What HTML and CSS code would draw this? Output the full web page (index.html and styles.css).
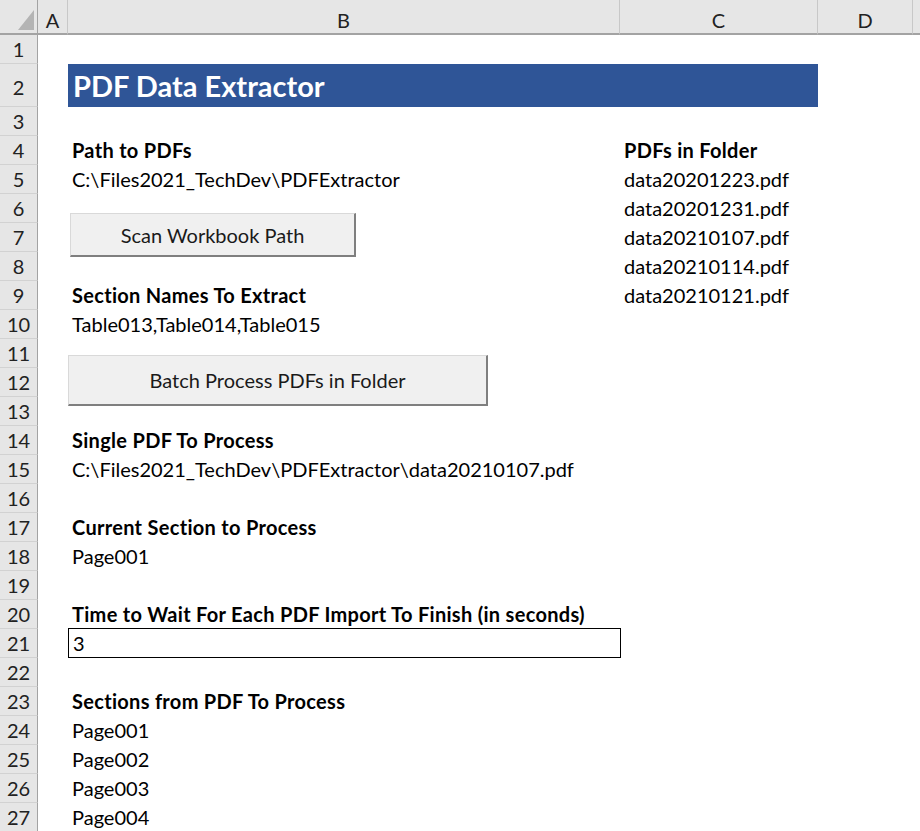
FILE: index.html
```html
<!DOCTYPE html>
<html lang="en">
<head>
<meta charset="utf-8">
<title>PDF Data Extractor</title>
<link rel="stylesheet" href="styles.css">
</head>
<body>
<div class="sheet">
  <div class="row">
    <div class="ch corner"><svg class="tri" width="16" height="20" viewBox="0 0 16 20"><polygon points="16,0 16,20 0,20" fill="#b4b4b4"/></svg></div>
    <div class="ch">A</div>
    <div class="ch">B</div>
    <div class="ch">C</div>
    <div class="ch">D</div>
    <div class="ch last"></div>
  </div>

  <div class="row"><div class="rh">1</div><div class="cell"></div><div class="cell"></div><div class="cell"></div><div class="cell"></div><div class="cell"></div></div>
  <div class="row"><div class="rh tall">2</div><div class="cell"></div><div class="cell banner">PDF Data Extractor</div><div class="cell"></div><div class="cell"></div></div>
  <div class="row"><div class="rh">3</div><div class="cell"></div><div class="cell"></div><div class="cell"></div><div class="cell"></div><div class="cell"></div></div>
  <div class="row"><div class="rh">4</div><div class="cell"></div><div class="cell txt bold">Path to PDFs</div><div class="cell txt bold">PDFs in Folder</div><div class="cell"></div><div class="cell"></div></div>
  <div class="row"><div class="rh">5</div><div class="cell"></div><div class="cell txt">C:\Files2021_TechDev\PDFExtractor</div><div class="cell txt">data20201223.pdf</div><div class="cell"></div><div class="cell"></div></div>

  <div class="btn-area scan-area"><div class="btn scan">Scan Workbook Path</div></div>
  <div class="row"><div class="rh">6</div><div class="cell"></div><div class="cell txt">data20201231.pdf</div><div class="cell"></div><div class="cell"></div></div>
  <div class="row"><div class="rh">7</div><div class="cell"></div><div class="cell txt">data20210107.pdf</div><div class="cell"></div><div class="cell"></div></div>
  <div class="row"><div class="rh">8</div><div class="cell"></div><div class="cell txt">data20210114.pdf</div><div class="cell"></div><div class="cell"></div></div>

  <div class="row"><div class="rh">9</div><div class="cell"></div><div class="cell txt bold">Section Names To Extract</div><div class="cell txt">data20210121.pdf</div><div class="cell"></div><div class="cell"></div></div>
  <div class="row"><div class="rh">10</div><div class="cell"></div><div class="cell txt">Table013,Table014,Table015</div><div class="cell"></div><div class="cell"></div><div class="cell"></div></div>

  <div class="btn-area batch-area"><div class="btn batch">Batch Process PDFs in Folder</div></div>
  <div class="row"><div class="rh">11</div><div class="cell"></div><div class="cell"></div><div class="cell"></div><div class="cell"></div></div>
  <div class="row"><div class="rh">12</div><div class="cell"></div><div class="cell"></div><div class="cell"></div><div class="cell"></div></div>
  <div class="row"><div class="rh">13</div><div class="cell"></div><div class="cell"></div><div class="cell"></div><div class="cell"></div></div>

  <div class="row"><div class="rh">14</div><div class="cell"></div><div class="cell txt bold">Single PDF To Process</div><div class="cell"></div><div class="cell"></div><div class="cell"></div></div>
  <div class="row"><div class="rh">15</div><div class="cell"></div><div class="cell txt">C:\Files2021_TechDev\PDFExtractor\data20210107.pdf</div><div class="cell"></div><div class="cell"></div><div class="cell"></div></div>
  <div class="row"><div class="rh">16</div><div class="cell"></div><div class="cell"></div><div class="cell"></div><div class="cell"></div><div class="cell"></div></div>
  <div class="row"><div class="rh">17</div><div class="cell"></div><div class="cell txt bold">Current Section to Process</div><div class="cell"></div><div class="cell"></div><div class="cell"></div></div>
  <div class="row"><div class="rh">18</div><div class="cell"></div><div class="cell txt">Page001</div><div class="cell"></div><div class="cell"></div><div class="cell"></div></div>
  <div class="row"><div class="rh">19</div><div class="cell"></div><div class="cell"></div><div class="cell"></div><div class="cell"></div><div class="cell"></div></div>
  <div class="row"><div class="rh">20</div><div class="cell"></div><div class="cell txt bold">Time to Wait For Each PDF Import To Finish (in seconds)</div><div class="cell"></div><div class="cell"></div><div class="cell"></div></div>
  <div class="row"><div class="rh">21</div><div class="cell"></div><div class="cell txt input">3</div><div class="cell"></div><div class="cell"></div><div class="cell"></div></div>
  <div class="row"><div class="rh">22</div><div class="cell"></div><div class="cell"></div><div class="cell"></div><div class="cell"></div><div class="cell"></div></div>
  <div class="row"><div class="rh">23</div><div class="cell"></div><div class="cell txt bold">Sections from PDF To Process</div><div class="cell"></div><div class="cell"></div><div class="cell"></div></div>
  <div class="row"><div class="rh">24</div><div class="cell"></div><div class="cell txt">Page001</div><div class="cell"></div><div class="cell"></div><div class="cell"></div></div>
  <div class="row"><div class="rh">25</div><div class="cell"></div><div class="cell txt">Page002</div><div class="cell"></div><div class="cell"></div><div class="cell"></div></div>
  <div class="row"><div class="rh">26</div><div class="cell"></div><div class="cell txt">Page003</div><div class="cell"></div><div class="cell"></div><div class="cell"></div></div>
  <div class="row"><div class="rh">27</div><div class="cell"></div><div class="cell txt">Page004</div><div class="cell"></div><div class="cell"></div><div class="cell"></div></div>
</div>
</body>
</html>
```

FILE: styles.css
```css
* { box-sizing: border-box; }

html, body {
  margin: 0;
  padding: 0;
  height: 831px;
  overflow: hidden;
  background: #ffffff;
}

.sheet {
  display: grid;
  grid-template-columns: 38px 30px 552px 198px 95px 1fr;
  grid-template-rows: 35px 29px 43px repeat(25, 29px);
  font-family: Lato, "Open Sans", sans-serif;
  font-size: 20px;
  color: #000;
}

.row { display: contents; }

.ch {
  background: #e6e6e6;
  border-right: 1px solid #c8c8c8;
  border-bottom: 2px solid #a3a3a3;
  text-align: center;
  line-height: 24px;
  padding-top: 8px;
  color: #222;
}
.ch.last { border-right: none; }
.corner {
  position: relative;
  border-right: 1px solid #a3a3a3;
  padding: 0;
}
.tri {
  position: absolute;
  right: 3px;
  bottom: 3px;
}

.rh {
  background: #e6e6e6;
  border-right: 1px solid #a3a3a3;
  border-bottom: 1px solid #d2d2d2;
  text-align: center;
  line-height: 29px;
  color: #222;
}
.rh.tall { line-height: 46px; }

.cell {
  white-space: nowrap;
  min-width: 0;
}

.txt {
  padding-left: 4px;
  line-height: 29px;
}

.bold {
  font-weight: 700;
  letter-spacing: 0.3px;
}

.banner {
  grid-column: span 2;
  background: #2f5597;
  color: #ffffff;
  font-weight: 700;
  font-size: 29px;
  line-height: 43px;
  padding-left: 5px;
}

.input {
  border: 1px solid #000;
  margin-top: -1px;
  margin-right: -1px;
  height: 30px;
  line-height: 28px;
  padding-left: 4px;
}

.btn-area {
  grid-column: 3;
  position: relative;
  z-index: 1;
}
.scan-area { grid-row: 7 / span 3; }
.batch-area { grid-row: 12 / span 3; }

.btn {
  background: #f0f0f0;
  border-top: 1px solid #d9d9d9;
  border-left: 1px solid #d9d9d9;
  border-right: 2px solid #7f7f7f;
  border-bottom: 2px solid #7f7f7f;
  display: flex;
  align-items: center;
  justify-content: center;
  color: #1a1a1a;
  white-space: nowrap;
}
.scan {
  margin-top: 19px;
  margin-left: 2px;
  width: 286px;
  height: 44px;
}
.batch {
  margin-top: 16px;
  width: 420px;
  height: 51px;
}
```
